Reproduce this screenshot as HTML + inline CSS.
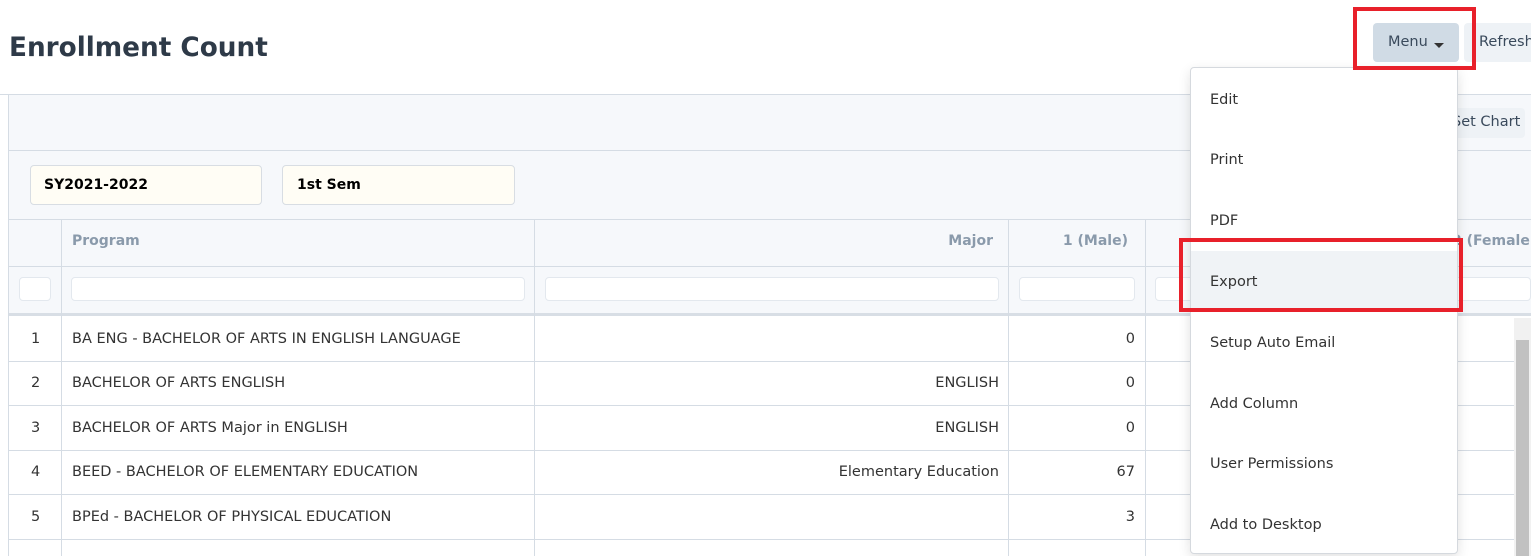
<!DOCTYPE html>
<html><head><style>
*{box-sizing:border-box;margin:0;padding:0}
body{width:1531px;height:556px;overflow:hidden;background:#fff;font-family:"DejaVu Sans","Liberation Sans",sans-serif;color:#333;position:relative;font-size:14.5px}
.a{position:absolute}
.hl{position:absolute;background:#d5dce4;height:1px}
.vl{position:absolute;background:#d5dce4;width:1px}
.inp{position:absolute;background:#fff;border:1px solid #e3e8ee;border-radius:4px;height:24px}
.t{position:absolute;white-space:nowrap;font-size:14.5px;color:#333}
.r{text-align:right}
.m{position:absolute;left:1210px;font-size:14.5px;color:#333}
</style></head><body>
<div class="t" style="left:9px;top:33px;font-size:26.3px;font-weight:700;color:#2e3a48">Enrollment Count</div>
<div class="a" style="left:1373px;top:23px;width:86px;height:39px;background:#d0dbe5;border-radius:4px"></div>
<div class="t" style="left:1388px;top:34px;color:#3a4a5c">Menu</div>
<div class="a" style="left:1434px;top:43px;border-left:5px solid transparent;border-right:5px solid transparent;border-top:5px solid #333"></div>
<div class="a" style="left:1464px;top:23px;width:70px;height:39px;background:#eef2f6;border-radius:4px"></div>
<div class="t" style="left:1479px;top:34px;color:#3a4a5c">Refresh</div>

<div class="a" style="left:8px;top:94px;width:1523px;height:125px;background:#f6f8fb"></div>
<div class="a" style="left:8px;top:219px;width:1523px;height:96px;background:#f6f8fb"></div>
<div class="hl" style="left:0;top:94px;width:1531px"></div>
<div class="hl" style="left:8px;top:150px;width:1523px"></div>
<div class="hl" style="left:8px;top:219px;width:1523px"></div>
<div class="hl" style="left:8px;top:266px;width:1523px"></div>
<div class="hl" style="left:8px;top:313px;width:1523px;height:3px;background:#d8dee5"></div>
<div class="hl" style="left:8px;top:361px;width:1523px"></div>
<div class="hl" style="left:8px;top:405px;width:1523px"></div>
<div class="hl" style="left:8px;top:450px;width:1523px"></div>
<div class="hl" style="left:8px;top:494px;width:1523px"></div>
<div class="hl" style="left:8px;top:539px;width:1523px"></div>
<div class="vl" style="left:8px;top:94px;height:462px"></div>
<div class="vl" style="left:61px;top:219px;height:337px"></div>
<div class="vl" style="left:534px;top:219px;height:337px"></div>
<div class="vl" style="left:1008px;top:219px;height:337px"></div>
<div class="vl" style="left:1145px;top:219px;height:337px"></div>

<div class="a" style="left:1440px;top:108px;width:85px;height:30px;background:#eef2f6;border-radius:4px"></div>
<div class="t" style="left:1452px;top:114px;color:#3a4a5c">Set Chart</div>

<div class="a" style="left:30px;top:165px;width:232px;height:40px;background:#fffdf5;border:1px solid #d8dde3;border-radius:4px"></div>
<div class="t" style="left:44px;top:177px;font-weight:700;color:#000;font-size:14px">SY2021-2022</div>
<div class="a" style="left:282px;top:165px;width:233px;height:40px;background:#fffdf5;border:1px solid #d8dde3;border-radius:4px"></div>
<div class="t" style="left:297px;top:177px;font-weight:700;color:#000;font-size:14px">1st Sem</div>

<div class="t" style="left:72px;top:233px;font-weight:700;color:#8a9aab;font-size:14px">Program</div>
<div class="t r" style="left:800px;width:193px;top:233px;font-weight:700;color:#8a9aab;font-size:14px">Major</div>
<div class="t r" style="left:1020px;width:108px;top:233px;font-weight:700;color:#8a9aab;font-size:14px">1 (Male)</div>
<div class="t" style="left:1452px;top:233px;font-weight:700;color:#8a9aab;font-size:14px">2 (Female)</div>

<div class="inp" style="left:19px;top:277px;width:32px"></div>
<div class="inp" style="left:71px;top:277px;width:454px"></div>
<div class="inp" style="left:545px;top:277px;width:454px"></div>
<div class="inp" style="left:1019px;top:277px;width:116px"></div>
<div class="inp" style="left:1155px;top:277px;width:376px"></div>

<div class="t" style="left:31px;top:331px">1</div><div class="t" style="left:72px;top:331px">BA ENG - BACHELOR OF ARTS IN ENGLISH LANGUAGE</div><div class="t r" style="left:1020px;width:115px;top:331px">0</div>
<div class="t" style="left:31px;top:375px">2</div><div class="t" style="left:72px;top:375px">BACHELOR OF ARTS ENGLISH</div><div class="t r" style="left:700px;width:299px;top:375px">ENGLISH</div><div class="t r" style="left:1020px;width:115px;top:375px">0</div>
<div class="t" style="left:31px;top:420px">3</div><div class="t" style="left:72px;top:420px">BACHELOR OF ARTS Major in ENGLISH</div><div class="t r" style="left:700px;width:299px;top:420px">ENGLISH</div><div class="t r" style="left:1020px;width:115px;top:420px">0</div>
<div class="t" style="left:31px;top:464px">4</div><div class="t" style="left:72px;top:464px">BEED - BACHELOR OF ELEMENTARY EDUCATION</div><div class="t r" style="left:700px;width:299px;top:464px">Elementary Education</div><div class="t r" style="left:1020px;width:115px;top:464px">67</div>
<div class="t" style="left:31px;top:509px">5</div><div class="t" style="left:72px;top:509px">BPEd - BACHELOR OF PHYSICAL EDUCATION</div><div class="t r" style="left:1020px;width:115px;top:509px">3</div>

<div class="a" style="left:1514px;top:318px;width:17px;height:238px;background:#f1f1f1"></div>
<div class="a" style="left:1516px;top:340px;width:13px;height:216px;background:#c1c1c1"></div>

<div class="a" style="left:1190px;top:67px;width:268px;height:487px;background:#fff;border:1px solid #d5d9de;border-radius:4px;box-shadow:0 4px 12px rgba(0,0,0,.12)"></div>
<div class="a" style="left:1191px;top:251px;width:266px;height:61px;background:#f0f3f6"></div>
<div class="m" style="top:92px">Edit</div>
<div class="m" style="top:152px">Print</div>
<div class="m" style="top:213px">PDF</div>
<div class="m" style="top:274px">Export</div>
<div class="m" style="top:335px">Setup Auto Email</div>
<div class="m" style="top:396px">Add Column</div>
<div class="m" style="top:456px">User Permissions</div>
<div class="m" style="top:517px">Add to Desktop</div>

<div class="a" style="left:1353px;top:7px;width:123px;height:63px;border:4px solid #e8202a"></div>
<div class="a" style="left:1179px;top:238px;width:284px;height:74px;border:4px solid #e8202a"></div>
</body></html>
